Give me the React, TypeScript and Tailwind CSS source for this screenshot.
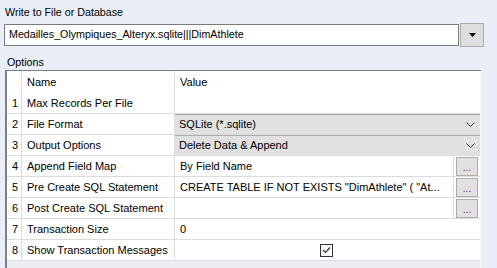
const rows: { n: number; name: string; kind: "text" | "combo" | "dots" | "check"; value: string }[] = [
  { n: 1, name: "Max Records Per File", kind: "text", value: "" },
  { n: 2, name: "File Format", kind: "combo", value: "SQLite (*.sqlite)" },
  { n: 3, name: "Output Options", kind: "combo", value: "Delete Data & Append" },
  { n: 4, name: "Append Field Map", kind: "dots", value: "By Field Name" },
  { n: 5, name: "Pre Create SQL Statement", kind: "dots", value: 'CREATE TABLE IF NOT EXISTS "DimAthlete" ( "At...' },
  { n: 6, name: "Post Create SQL Statement", kind: "dots", value: "" },
  { n: 7, name: "Transaction Size", kind: "text", value: "0" },
  { n: 8, name: "Show Transaction Messages", kind: "check", value: "" },
];

function ValueCell({ kind, value }: { kind: string; value: string }) {
  if (kind === "combo") {
    return (
      <div className="flex-1 flex items-center bg-[#e1e1e1] border-t border-[#adadad] pl-[4px] pr-[5px]">
        <span className="flex-1 whitespace-nowrap">{value}</span>
        <svg width="9" height="5" viewBox="0 0 9 5">
          <path d="M0.5 0.5 L4.5 4.5 L8.5 0.5" fill="none" stroke="#3c3c3c" strokeWidth="1" />
        </svg>
      </div>
    );
  }
  if (kind === "dots") {
    return (
      <div className="flex-1 flex items-center">
        <span className="flex-1 pl-[5px] whitespace-nowrap overflow-hidden">{value}</span>
        <div className="self-stretch w-px bg-[#dcdcdc]" />
        <div className="w-[26px] flex items-center justify-center">
          <div className="w-[22px] h-[19px] bg-[#e1e1e1] border border-[#adadad] flex items-center justify-center text-[#6a1a8a] text-[10px] leading-none pt-[3px]">
            ...
          </div>
        </div>
      </div>
    );
  }
  if (kind === "check") {
    return (
      <div className="flex-1 flex items-center justify-center pr-[2px]">
        <div className="w-[13px] h-[13px] border border-[#333] bg-white flex items-center justify-center">
          <svg width="9" height="8" viewBox="0 0 9 8">
            <path d="M1 4 L3.5 6.5 L8 1.5" fill="none" stroke="#333" strokeWidth="1.2" />
          </svg>
        </div>
      </div>
    );
  }
  return <div className="flex-1 flex items-center pl-[5px] whitespace-nowrap">{value}</div>;
}

export default function App() {
  return (
    <div
      className="w-[497px] h-[268px] overflow-hidden bg-[#e9eef9] text-black flex flex-col"
      style={{ fontFamily: '"Liberation Sans", Arial, sans-serif' }}
    >
      <div className="pl-[5px] pt-[5px] h-[22px] text-[10.7px] leading-[14px]">Write to File or Database</div>
      <div className="flex items-center pl-[4px] h-[25px]">
        <div className="w-[455px] h-[22px] bg-white border border-[#7a7a7a] flex items-center pl-[4px] text-[10.7px] whitespace-nowrap">
          Medailles_Olympiques_Alteryx.sqlite|||DimAthlete
        </div>
        <div className="ml-px w-[24px] h-[24px] bg-[#dedede] border border-[#adadad] flex items-center justify-center">
          <svg width="7" height="4" viewBox="0 0 7 4">
            <path d="M0 0 H7 L3.5 4 Z" fill="#000" />
          </svg>
        </div>
      </div>
      <div className="pl-[7px] pt-[8px] h-[23px] text-[10.7px] leading-[14px]">Options</div>
      <div className="ml-[5px] w-[477px] flex-1 border-l-2 border-t border-[#808080] border-r-2 border-r-[#f4f4f4] bg-[#ececf3] text-[11px]">
        <div className="bg-white flex h-[22px]">
          <div className="w-[15px] border-r border-[#dcdcdc]" />
          <div className="w-[153px] border-r border-[#dcdcdc] flex items-center pl-[5px]">Name</div>
          <div className="flex-1 flex items-center pl-[5px]">Value</div>
        </div>
        {rows.map((r) => (
          <div key={r.n} className="bg-white flex h-[21px] border-b border-[#dcdcdc]">
            <div className="w-[15px] border-r border-[#dcdcdc] flex items-center pl-[5px]">{r.n}</div>
            <div className="w-[153px] border-r border-[#dcdcdc] flex items-center pl-[5px] whitespace-nowrap">{r.name}</div>
            <ValueCell kind={r.kind} value={r.value} />
          </div>
        ))}
      </div>
    </div>
  );
}
